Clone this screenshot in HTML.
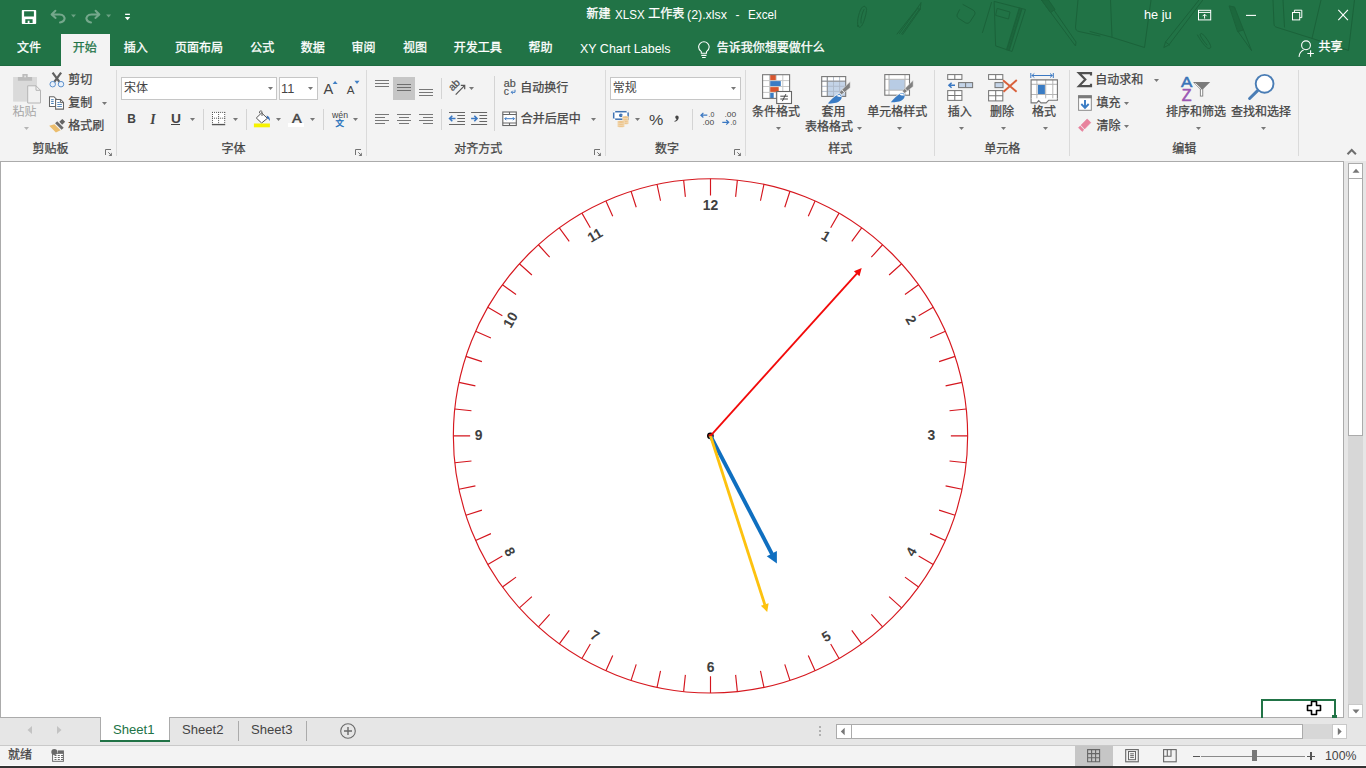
<!DOCTYPE html>
<html lang="zh"><head><meta charset="utf-8"><title>Excel</title>
<style>
html,body{margin:0;padding:0}
body{width:1366px;height:768px;overflow:hidden;position:relative;background:#fff;font-family:"Liberation Sans",sans-serif;}
.a{position:absolute;display:block}
.t{position:absolute;display:block;white-space:nowrap;line-height:1;transform-origin:0 50%}
.k{font-family:"Liberation Sans","Noto Sans CJK SC",sans-serif;font-size:12px}
</style></head><body>
<div class="a" style="left:0px;top:0px;width:1366px;height:66px;background:#217346;"></div>
<svg class="a" style="left:0;top:0" width="1366" height="66" viewBox="0 0 1366 66" fill="none" stroke="#1a6038" stroke-width="1" stroke-linecap="round" stroke-linejoin="round" opacity=".85">
<path d="M858 26.500c-1.800-6 2-17.500 4.500-19.500c2-1.500 4.500 0 4 3.500c-.6 5-3 13-5 15.500c-1.500 1.800-3.300 1.500-3.500-.500z"/>
<path d="M861 23c-.800-4 1.500-11 3-13.500"/>
<path d="M920.900 2.900l-3.800 5.600l-20 25.500M920.900 2.900l-.700 6.500l-17.500 25M917.100 8.500l3.100 .900M899.500 33.500l18.500-25.500M901.500 34l18-25"/>
<path d="M963 4.500l10 5.500c2 1.200 2.500 3 1.500 4.800l-4.500 7c-1 1.500-2.800 2-4.500 1l-7-4.500c-1.500-1-2-3-1-4.500l2-4"/>
<path d="M991.500 2.500l-9 30"/>
<path d="M994.500 1.500l31 8l-13.500 42l-16-5.500z"/>
<path d="M1021.500 9l-12.500 41M1019.500 8.500l-12.500 41" stroke-width="1.800"/>
<path d="M997.500 8.500l12.500 3.500l-1.500 7l-12.500-3.500z"/>
<path d="M1041.500 0l34 46l.500-4l-29-42z"/>
<path d="M1041.500 0l9 12.500l4.500-3l-6.500-9.500z" fill="#1c673c"/>
<path d="M1078 0l-2.500 27c-.200 2.500 1 4 3.500 4.500l21 4.500"/>
<path d="M1090 31.500l21 5.500l33.500 10.500l6.500-47.500M1110.500 0l1.500 37"/>
<path d="M1199 0l-33.500 42l-1.700 5.500l5-2.500l34-45M1165.500 42l4 3"/>
<path d="M1197.500 35c2 4 7 11 10 13c2 1.300 3.800 0 3-2.500c-1-3-5-9-8-11.500c-1.500-1.200-3 0-2 2c1.500 3 4.500 7 6.500 9"/>
<path d="M1229.500 6l5 1l9 23l-5.500 1.500z" fill="#1c673c"/>
<path d="M1238 31.500l13.500 19M1243.500 30l8 20.500"/>
<path d="M1273 0l1 24c.100 1.800 1 2.800 3 3.400l35 11l36.500 12l6-50.400M1283 0l1.500 27M1312 38.400l9-38.400"/>
</svg>

<div class="a" style="left:0px;top:65px;width:1366px;height:1px;background:#1d6a40;"></div>
<div class="a" style="left:61px;top:34px;width:49px;height:32px;background:#f3f3f3;"></div>
<span class="t k" style="left:586.6px;top:7.6px;color:#fff;-webkit-text-stroke:.3px #fff;">新建</span>
<span class="t" style="left:614.6px;top:8.64px;font-size:12px;color:#fff;transform:scaleX(0.9646);">XLSX</span>
<span class="t k" style="left:648.2px;top:7.6px;color:#fff;-webkit-text-stroke:.3px #fff;">工作表</span>
<span class="t" style="left:687.4px;top:8.64px;font-size:12px;color:#fff;transform:scaleX(1.0345);">(2).xlsx</span>
<span class="t" style="left:735.6px;top:8.64px;font-size:12px;color:#fff;">-</span>
<span class="t" style="left:748.3px;top:8.64px;font-size:12px;color:#fff;transform:scaleX(0.9747);">Excel</span>
<span class="t" style="left:1144px;top:8.64px;font-size:12px;color:#fff;transform:scaleX(1.0607);">he ju</span>
<span class="t k" style="left:16.9px;top:41.9px;color:#fff;-webkit-text-stroke:.3px #fff;">文件</span>
<span class="t k" style="left:123.8px;top:41.9px;color:#fff;-webkit-text-stroke:.3px #fff;">插入</span>
<span class="t k" style="left:175.1px;top:41.9px;color:#fff;-webkit-text-stroke:.3px #fff;">页面布局</span>
<span class="t k" style="left:250.2px;top:41.9px;color:#fff;-webkit-text-stroke:.3px #fff;">公式</span>
<span class="t k" style="left:300.8px;top:41.9px;color:#fff;-webkit-text-stroke:.3px #fff;">数据</span>
<span class="t k" style="left:351.6px;top:41.9px;color:#fff;-webkit-text-stroke:.3px #fff;">审阅</span>
<span class="t k" style="left:403px;top:41.9px;color:#fff;-webkit-text-stroke:.3px #fff;">视图</span>
<span class="t k" style="left:453.8px;top:41.9px;color:#fff;-webkit-text-stroke:.3px #fff;">开发工具</span>
<span class="t k" style="left:528.4px;top:41.9px;color:#fff;-webkit-text-stroke:.3px #fff;">帮助</span>
<span class="t k" style="left:72.8px;top:41.9px;color:#217346;-webkit-text-stroke:.25px #217346;">开始</span>
<span class="t" style="left:580px;top:42.94px;font-size:12px;color:#fff;transform:scaleX(1.0391);">XY Chart Labels</span>
<span class="t k" style="left:716.7px;top:41.9px;color:#fff;-webkit-text-stroke:.3px #fff;">告诉我你想要做什么</span>
<span class="t k" style="left:1318.4px;top:41.1px;color:#fff;-webkit-text-stroke:.3px #fff;">共享</span>
<svg class="a" style="left:0;top:0" width="1366" height="66" viewBox="0 0 1366 66" fill="none">
<!-- save -->
<path d="M22.6 9.9h12.8a.8.8 0 0 1 .8.8v12.6a.8.8 0 0 1-.8.8H22.6a.8.8 0 0 1-.8-.8V10.7a.8.8 0 0 1 .8-.8z" fill="#fff"/>
<rect x="24.1" y="11.3" width="9.8" height="5.2" fill="#217346"/>
<rect x="25.3" y="19.2" width="7.3" height="3.8" fill="#217346"/>
<rect x="27.7" y="20.7" width="1.8" height="2.3" fill="#fff"/>
<!-- undo -->
<g stroke="#fff" opacity=".38" stroke-width="2" stroke-linecap="round" stroke-linejoin="round">
<path d="M55.4 10.8L51.6 14.4L55.6 17.9M52 14.4H59.5C63.5 14.4 65 17.2 64.4 19.4C63.8 21.4 62 22.2 60 22.4"/>
<path d="M95.6 10.8L99.4 14.4L95.4 17.9M99 14.4H91.5C87.5 14.4 86 17.2 86.6 19.4C87.2 21.4 89 22.2 91 22.4"/>
</g>
<path d="M71 14.6h5l-2.5 3z" fill="#fff" fill-opacity=".33"/>
<path d="M106.1 14.6h5l-2.5 3z" fill="#fff" fill-opacity=".33"/>
<!-- customize -->
<rect x="125.1" y="13.7" width="4.8" height="1.3" fill="#fff"/>
<path d="M124.8 16.9h5.4l-2.7 3.4z" fill="#fff"/>
<!-- ribbon display options -->
<rect x="1198.5" y="10.3" width="12.2" height="9.6" stroke="#fff" stroke-width="1"/>
<path d="M1198.5 12.4h12.2" stroke="#fff" stroke-width="1"/>
<path d="M1204.6 18.6v-4.2M1202.6 16.2l2-2 2 2" stroke="#fff" stroke-width="1"/>
<!-- minimize -->
<path d="M1246 15.4h10" stroke="#fff" stroke-width="1.1"/>
<!-- restore -->
<path d="M1294.4 12.2v-2h7.4v7.4h-2" stroke="#fff" stroke-width="1"/>
<rect x="1292.5" y="12.5" width="7.2" height="7.4" stroke="#fff" stroke-width="1"/>
<!-- close -->
<path d="M1338.3 9.9l9.6 10.2M1347.9 9.9l-9.6 10.2" stroke="#fff" stroke-width="1.1"/>
<!-- person -->
<circle cx="1306" cy="45.3" r="4.4" stroke="#fff" stroke-width="1.1"/>
<path d="M1299 56.9c.2-3.3 2-5.6 4.600-6.800" stroke="#fff" stroke-width="1.1"/>
<path d="M1310.6 50.2v6.600M1307.3 53.5h6.600" stroke="#fff" stroke-width="1.1"/>
<!-- bulb -->
<path d="M701.300 53.300v-1.700c-1.700-1.100-2.700-2.500-2.700-4.500a5.300 5.300 0 0 1 10.600 0c0 2-1 3.400-2.700 4.500v1.700z" stroke="#fff" stroke-width="1.100"/>
<path d="M701.300 55.400h5.200M702.100 57.500h3.600" stroke="#fff" stroke-width="1.100"/>
</svg>

<div class="a" style="left:0px;top:66px;width:1366px;height:95px;background:#f3f3f3;"></div>
<div class="a" style="left:0px;top:161px;width:1366px;height:1px;background:#ababab;"></div>
<div class="a" style="left:116px;top:70px;width:1px;height:86px;background:#dadada;"></div>
<div class="a" style="left:366px;top:70px;width:1px;height:86px;background:#dadada;"></div>
<div class="a" style="left:605px;top:70px;width:1px;height:86px;background:#dadada;"></div>
<div class="a" style="left:745px;top:70px;width:1px;height:86px;background:#dadada;"></div>
<div class="a" style="left:934px;top:70px;width:1px;height:86px;background:#dadada;"></div>
<div class="a" style="left:1069px;top:70px;width:1px;height:86px;background:#dadada;"></div>
<div class="a" style="left:1298px;top:70px;width:1px;height:86px;background:#dadada;"></div>
<div class="a" style="left:494px;top:76px;width:1px;height:54.5px;background:#d4d4d4;"></div>
<div class="a" style="left:203px;top:109px;width:1px;height:21px;background:#d4d4d4;"></div>
<div class="a" style="left:246px;top:109px;width:1px;height:21px;background:#d4d4d4;"></div>
<div class="a" style="left:323px;top:109px;width:1px;height:21px;background:#d4d4d4;"></div>
<div class="a" style="left:441px;top:78px;width:1px;height:21px;background:#d4d4d4;"></div>
<div class="a" style="left:441px;top:109px;width:1px;height:21px;background:#d4d4d4;"></div>
<div class="a" style="left:692px;top:109px;width:1px;height:21px;background:#d4d4d4;"></div>
<span class="t k" style="left:32.4px;top:142.5px;color:#444;-webkit-text-stroke:.25px #444;">剪贴板</span>
<span class="t k" style="left:221.4px;top:142.5px;color:#444;-webkit-text-stroke:.25px #444;">字体</span>
<span class="t k" style="left:454.2px;top:142.5px;color:#444;-webkit-text-stroke:.25px #444;">对齐方式</span>
<span class="t k" style="left:655.1px;top:142.5px;color:#444;-webkit-text-stroke:.25px #444;">数字</span>
<span class="t k" style="left:828.2px;top:142.5px;color:#444;-webkit-text-stroke:.25px #444;">样式</span>
<span class="t k" style="left:984.3px;top:142.5px;color:#444;-webkit-text-stroke:.25px #444;">单元格</span>
<span class="t k" style="left:1172.3px;top:142.5px;color:#444;-webkit-text-stroke:.25px #444;">编辑</span>
<svg class="a" style="left:105px;top:149px;" width="8" height="8"><path d="M0.5 6V0.5H6" fill="none" stroke="#727272" stroke-width="1"/><path d="M3.300 3.300L5.500 5.500" stroke="#727272" stroke-width="1"/><path d="M6.900 3.600V6.900H3.600z" fill="#727272"/></svg>
<svg class="a" style="left:355px;top:149px;" width="8" height="8"><path d="M0.5 6V0.5H6" fill="none" stroke="#727272" stroke-width="1"/><path d="M3.300 3.300L5.500 5.500" stroke="#727272" stroke-width="1"/><path d="M6.900 3.600V6.900H3.600z" fill="#727272"/></svg>
<svg class="a" style="left:594px;top:149px;" width="8" height="8"><path d="M0.5 6V0.5H6" fill="none" stroke="#727272" stroke-width="1"/><path d="M3.300 3.300L5.500 5.500" stroke="#727272" stroke-width="1"/><path d="M6.900 3.600V6.900H3.600z" fill="#727272"/></svg>
<svg class="a" style="left:734px;top:149px;" width="8" height="8"><path d="M0.5 6V0.5H6" fill="none" stroke="#727272" stroke-width="1"/><path d="M3.300 3.300L5.500 5.500" stroke="#727272" stroke-width="1"/><path d="M6.900 3.600V6.900H3.600z" fill="#727272"/></svg>
<span class="t k" style="left:12.5px;top:106px;color:#a6a6a6;">粘贴</span>
<svg class="a" style="left:22.8px;top:125.8px;" width="7" height="5"><path d="M1 1h5l-2.5 3z" fill="#b5b5b5"/></svg>
<span class="t k" style="left:68.2px;top:74px;color:#444;-webkit-text-stroke:.25px #444;">剪切</span>
<span class="t k" style="left:68.2px;top:96.6px;color:#444;-webkit-text-stroke:.25px #444;">复制</span>
<svg class="a" style="left:101px;top:100.8px;" width="7" height="5"><path d="M1 1h5l-2.5 3z" fill="#777"/></svg>
<span class="t k" style="left:68.2px;top:119.6px;color:#444;-webkit-text-stroke:.25px #444;">格式刷</span>
<div class="a" style="left:121px;top:77px;width:156px;height:23px;background:#fff;box-sizing:border-box;border:1px solid #c6c6c6;"></div>
<div class="a" style="left:278.5px;top:77px;width:39.5px;height:23px;background:#fff;box-sizing:border-box;border:1px solid #c6c6c6;"></div>
<span class="t k" style="left:123.9px;top:82.1px;color:#444;">宋体</span>
<svg class="a" style="left:266.9px;top:86.1px;" width="7" height="5"><path d="M1 1h5l-2.5 3z" fill="#777"/></svg>
<span class="t" style="left:280.8px;top:82.59px;font-size:12.3px;color:#444;transform:scaleX(1.0379);">11</span>
<svg class="a" style="left:307px;top:86.1px;" width="7" height="5"><path d="M1 1h5l-2.5 3z" fill="#777"/></svg>
<span class="t" style="left:323.6px;top:82.07px;font-size:14.6px;color:#444;">A</span>
<span class="t" style="left:346.7px;top:84.43px;font-size:11.6px;color:#444;">A</span>
<svg class="a" style="left:331.5px;top:80px;" width="8" height="5"><path d="M0.6 4L3.100 .900L5.600 4z" fill="#3f7fc4"/></svg>
<svg class="a" style="left:353.6px;top:80px;" width="8" height="5"><path d="M0.5 .800L3 3.900L5.500 .800z" fill="#3f7fc4"/></svg>
<span class="t" style="left:127.2px;top:112.54px;font-size:12px;color:#444;font-weight:700;">B</span>
<span class="t" style="left:150.2px;top:112.81px;font-size:13.7px;color:#444;font-weight:700;font-style:italic;font-family:&quot;Liberation Serif&quot;,serif;">I</span>
<span class="t" style="left:170.5px;top:113.14px;font-size:12px;color:#444;font-weight:700;transform:scaleX(1.1539);">U</span>
<div class="a" style="left:171.3px;top:124px;width:8.4px;height:1px;background:#444;"></div>
<svg class="a" style="left:189.1px;top:117px;" width="7" height="5"><path d="M1 1h5l-2.5 3z" fill="#777"/></svg>
<svg class="a" style="left:231.7px;top:117px;" width="7" height="5"><path d="M1 1h5l-2.5 3z" fill="#777"/></svg>
<svg class="a" style="left:274.9px;top:117px;" width="7" height="5"><path d="M1 1h5l-2.5 3z" fill="#777"/></svg>
<span class="t" style="left:291.6px;top:111.56px;font-size:13.6px;color:#444;transform:scaleX(1.0583);-webkit-text-stroke:.55px #444;">A</span>
<div class="a" style="left:288.2px;top:123px;width:15.6px;height:4px;background:#fff;"></div>
<svg class="a" style="left:309.1px;top:117px;" width="7" height="5"><path d="M1 1h5l-2.5 3z" fill="#777"/></svg>
<span class="t" style="left:331.6px;top:110.7px;font-size:8.6px;color:#444;transform:scaleX(1.0142);">wén</span>
<span class="t k" style="left:335.6px;top:119px;font-size:8.4px;color:#2b75bd;-webkit-text-stroke:.5px #2b75bd;">文</span>
<svg class="a" style="left:351.9px;top:117px;" width="7" height="5"><path d="M1 1h5l-2.5 3z" fill="#777"/></svg>
<div class="a" style="left:393px;top:77px;width:22px;height:23px;background:#c6c6c6;"></div>
<div class="a" style="left:375px;top:80px;width:14px;height:1px;background:#777;"></div>
<div class="a" style="left:375px;top:83px;width:14px;height:1px;background:#777;"></div>
<div class="a" style="left:375px;top:86px;width:14px;height:1px;background:#777;"></div>
<div class="a" style="left:397px;top:84px;width:14px;height:1px;background:#6e6e6e;"></div>
<div class="a" style="left:397px;top:87px;width:14px;height:1px;background:#6e6e6e;"></div>
<div class="a" style="left:397px;top:90px;width:14px;height:1px;background:#6e6e6e;"></div>
<div class="a" style="left:419px;top:89px;width:14px;height:1px;background:#777;"></div>
<div class="a" style="left:419px;top:92px;width:14px;height:1px;background:#777;"></div>
<div class="a" style="left:419px;top:95px;width:14px;height:1px;background:#777;"></div>
<div class="a" style="left:375px;top:114px;width:14px;height:1px;background:#777;"></div>
<div class="a" style="left:375px;top:117px;width:10px;height:1px;background:#777;"></div>
<div class="a" style="left:375px;top:120px;width:14px;height:1px;background:#777;"></div>
<div class="a" style="left:375px;top:123px;width:10px;height:1px;background:#777;"></div>
<div class="a" style="left:397px;top:114px;width:14px;height:1px;background:#777;"></div>
<div class="a" style="left:399px;top:117px;width:10px;height:1px;background:#777;"></div>
<div class="a" style="left:397px;top:120px;width:14px;height:1px;background:#777;"></div>
<div class="a" style="left:399px;top:123px;width:10px;height:1px;background:#777;"></div>
<div class="a" style="left:419px;top:114px;width:14px;height:1px;background:#777;"></div>
<div class="a" style="left:423px;top:117px;width:10px;height:1px;background:#777;"></div>
<div class="a" style="left:419px;top:120px;width:14px;height:1px;background:#777;"></div>
<div class="a" style="left:423px;top:123px;width:10px;height:1px;background:#777;"></div>
<svg class="a" style="left:468px;top:85.9px;" width="7" height="5"><path d="M1 1h5l-2.5 3z" fill="#777"/></svg>
<span class="t k" style="left:520.2px;top:81.7px;color:#444;-webkit-text-stroke:.25px #444;">自动换行</span>
<span class="t k" style="left:520.7px;top:112.8px;color:#444;-webkit-text-stroke:.25px #444;">合并后居中</span>
<svg class="a" style="left:590px;top:117px;" width="7" height="5"><path d="M1 1h5l-2.5 3z" fill="#777"/></svg>
<div class="a" style="left:610px;top:77px;width:131px;height:23px;background:#fff;box-sizing:border-box;border:1px solid #c6c6c6;"></div>
<span class="t k" style="left:612.7px;top:82.1px;color:#444;">常规</span>
<svg class="a" style="left:729.8px;top:86.1px;" width="7" height="5"><path d="M1 1h5l-2.5 3z" fill="#777"/></svg>
<svg class="a" style="left:634px;top:117px;" width="7" height="5"><path d="M1 1h5l-2.5 3z" fill="#777"/></svg>
<span class="t" style="left:648.5px;top:112.17px;font-size:15.2px;color:#444;transform:scaleX(1.0581);">%</span>
<span class="t k" style="left:752px;top:106.2px;color:#444;-webkit-text-stroke:.25px #444;">条件格式</span>
<svg class="a" style="left:774.9px;top:125.8px;" width="7" height="5"><path d="M1 1h5l-2.5 3z" fill="#777"/></svg>
<span class="t k" style="left:821.6px;top:106.2px;color:#444;-webkit-text-stroke:.25px #444;">套用</span>
<span class="t k" style="left:804.9px;top:120.9px;color:#444;-webkit-text-stroke:.25px #444;">表格格式</span>
<svg class="a" style="left:856px;top:125.8px;" width="7" height="5"><path d="M1 1h5l-2.5 3z" fill="#777"/></svg>
<span class="t k" style="left:867.2px;top:106.2px;color:#444;-webkit-text-stroke:.25px #444;">单元格样式</span>
<svg class="a" style="left:896.2px;top:125.8px;" width="7" height="5"><path d="M1 1h5l-2.5 3z" fill="#777"/></svg>
<span class="t k" style="left:947.7px;top:106.2px;color:#444;-webkit-text-stroke:.25px #444;">插入</span>
<svg class="a" style="left:957.9px;top:125.8px;" width="7" height="5"><path d="M1 1h5l-2.5 3z" fill="#777"/></svg>
<span class="t k" style="left:989.9px;top:106.2px;color:#444;-webkit-text-stroke:.25px #444;">删除</span>
<svg class="a" style="left:1000.1px;top:125.8px;" width="7" height="5"><path d="M1 1h5l-2.5 3z" fill="#777"/></svg>
<span class="t k" style="left:1032.1px;top:106.2px;color:#444;-webkit-text-stroke:.25px #444;">格式</span>
<svg class="a" style="left:1041.9px;top:125.8px;" width="7" height="5"><path d="M1 1h5l-2.5 3z" fill="#777"/></svg>
<span class="t k" style="left:1095.3px;top:74px;color:#444;-webkit-text-stroke:.25px #444;">自动求和</span>
<svg class="a" style="left:1152.7px;top:77.7px;" width="7" height="5"><path d="M1 1h5l-2.5 3z" fill="#777"/></svg>
<span class="t k" style="left:1096.4px;top:96.7px;color:#444;-webkit-text-stroke:.25px #444;">填充</span>
<svg class="a" style="left:1123.1px;top:100.8px;" width="7" height="5"><path d="M1 1h5l-2.5 3z" fill="#777"/></svg>
<span class="t k" style="left:1096.4px;top:119.8px;color:#444;-webkit-text-stroke:.25px #444;">清除</span>
<svg class="a" style="left:1123.1px;top:124px;" width="7" height="5"><path d="M1 1h5l-2.5 3z" fill="#777"/></svg>
<span class="t k" style="left:1165.9px;top:106.2px;color:#444;-webkit-text-stroke:.25px #444;">排序和筛选</span>
<svg class="a" style="left:1195.1px;top:125.8px;" width="7" height="5"><path d="M1 1h5l-2.5 3z" fill="#777"/></svg>
<span class="t k" style="left:1231px;top:106.2px;color:#444;-webkit-text-stroke:.25px #444;">查找和选择</span>
<svg class="a" style="left:1260px;top:125.8px;" width="7" height="5"><path d="M1 1h5l-2.5 3z" fill="#777"/></svg>
<svg class="a" style="left:1346px;top:147px;" width="12" height="9"><path d="M1.500 7.200L5.700 3L9.900 7.200" fill="none" stroke="#6e6e6e" stroke-width="2"/></svg>
<svg class="a" style="left:0;top:66px" width="1366" height="95" viewBox="0 66 1366 95" fill="none" font-family="Liberation Sans, sans-serif">
<rect x="13.1" y="77" width="23.9" height="24.6" fill="#dadada"/>
<path d="M22.4 74h5.3v3h4.4v3.8H17.9V77h4.5z" fill="#bcbcbc"/>
<rect x="24.2" y="75.6" width="1.8" height="1.7" fill="#e4e4e4"/>
<path d="M27.7 85.8h8.3l4.5 4.5v12.7H27.7z" fill="#f1f1f1" stroke="#b4b4b4" stroke-width="1"/>
<path d="M36 85.8v4.5h4.5" stroke="#b4b4b4" stroke-width="1"/>
<path d="M52.6 72.7L59.4 81.9M61.1 72.7L54.3 81.9" stroke="#606060" stroke-width="2.25"/>
<circle cx="52.7" cy="84.2" r="2.75" fill="#eaf1fa" stroke="#4d87c7" stroke-width=".900"/>
<circle cx="61" cy="84.2" r="2.75" fill="#eaf1fa" stroke="#4d87c7" stroke-width=".900"/>
<path d="M49.5 96.7h4.4l2.3 2.3v7.4h-6.7z" fill="#fff" stroke="#666" stroke-width="1.05"/>
<path d="M51.1 99.7h2.6M51.1 101.6h2.6M51.1 103.5h2.6" stroke="#4a7fb5" stroke-width="1"/>
<path d="M55.6 99.5h5l2.9 2.9v6.7h-7.9z" fill="#fff" stroke="#666" stroke-width="1.05"/>
<path d="M60.4 99.7v2.9h2.9" stroke="#666" stroke-width="1"/>
<path d="M57.3 102.5h2.4M57.3 104.5h4.6M57.3 106.5h4.6" stroke="#4a7fb5" stroke-width=".9"/>
<path d="M62.3 118.9l2.9 2.9l-3 2.9l-2.9-2.9z" fill="#646464"/>
<path d="M57.2 121.2l6.5 6.5l-2.1 2.1l-6.5-6.500z" fill="#6c6c6c"/>
<path d="M54.5 124.2l6.1 6.1l-4.7 2.3l-6.7-6.9z" fill="#ebbd6d"/>
<rect x="212" y="112" width="13" height="11" fill="#fff"/>
<path d="M212 112.4h13.2M212 118.2h13.2" stroke="#555" stroke-width="1" stroke-dasharray="1 1.03"/>
<path d="M212.5 112v12M218.6 112v12M224.7 112v12" stroke="#555" stroke-width="1" stroke-dasharray="1 1.03"/>
<path d="M211.9 124.6h13.3" stroke="#555" stroke-width="1.3"/>
<path d="M261.6 112.9l5.8 5.4l-5.8 4.7l-5.3-5z" fill="#fff" stroke="#555" stroke-width="1"/>
<path d="M262 116v-4.3c0-1-2.5-1.2-2.5 .3v1.2" stroke="#555" stroke-width=".9"/>
<path d="M266.6 115.4c2.4 .500 3.700 2.900 3.300 5.800c-.900-1.700-1.700-2.300-2.700-2.700z" fill="#3b6fb6"/>
<rect x="253.9" y="123.5" width="16" height="3.8" fill="#f6f200"/>
<text x="0" y="0" font-size="10.5" fill="#505050" stroke="#505050" stroke-width=".25" transform="translate(452.4 91.6) rotate(-45)">ab</text>
<path d="M455.7 94.7l8.8-9" stroke="#555" stroke-width="1.2"/>
<path d="M460.8 85.4h3.9v3.9" stroke="#555" stroke-width="1.2" fill="none"/>
<text x="503.7" y="87.4" font-size="10.4" fill="#505050" stroke="#505050" stroke-width=".2" textLength="11.9" lengthAdjust="spacingAndGlyphs">ab</text>
<text x="503.7" y="94.8" font-size="10.4" fill="#505050" stroke="#505050" stroke-width=".2">c</text>
<path d="M515 89.7v2.6h-3.6M512.8 90.7l-1.6 1.6l1.6 1.6" stroke="#3b78c2" stroke-width="1"/>
<path d="M449 112.5h16M449 124.5h16M457.3 115.5h7.7M457.3 118.5h7.7M457.3 121.5h7.7" stroke="#666" stroke-width="1"/>
<path d="M455.5 118.5h-5.5M452.3 115.8l-2.7 2.7l2.7 2.7" stroke="#3b78c2" stroke-width="1.6"/>
<path d="M471.1 112.5h16M471.1 124.5h16M479.4 115.5h7.7M479.4 118.5h7.7M479.4 121.5h7.7" stroke="#666" stroke-width="1"/>
<path d="M471.1 118.5h5.5M474.3 115.8l2.7 2.7l-2.7 2.7" stroke="#3b78c2" stroke-width="1.6"/>
<rect x="502.8" y="112" width="13.5" height="13.5" fill="#fff" stroke="#666" stroke-width="1.1"/>
<path d="M502.8 114.5h13.5M502.8 123h13.5M509.5 112v2.5M509.5 123v2.5" stroke="#666" stroke-width="1.1"/>
<path d="M504.8 118.7h9.6M506.3 117.2l-1.5 1.5l1.5 1.5M512.9 117.2l1.5 1.5l-1.5 1.5" stroke="#3b78c2" stroke-width="1"/>
<rect x="613.7" y="111.7" width="14.4" height="7.5" fill="#fff" stroke="#3f73b3" stroke-width="1.5"/>
<path d="M613 111h2.2v1.5h-2.2zM626.6 111h2.2v1.5h-2.2zM613 118.4h2.2v1.5h-2.2z" fill="#fff"/>
<circle cx="620.9" cy="115.3" r="1.9" fill="#3f73b3"/>
<path d="M621.8 115.3a1 1 0 0 1 1.3 1.3" stroke="#fff" stroke-width=".8"/>
<ellipse cx="625.5" cy="123" rx="3.3" ry="1.25" fill="#ebbf80" stroke="#f6f0e6" stroke-width=".5"/>
<ellipse cx="625.5" cy="121" rx="3.3" ry="1.25" fill="#ebbf80" stroke="#f6f0e6" stroke-width=".5"/>
<ellipse cx="625.5" cy="119" rx="3.3" ry="1.25" fill="#ebbf80" stroke="#f6f0e6" stroke-width=".5"/>
<ellipse cx="625.5" cy="117.2" rx="3.3" ry="1.25" fill="#ebbf80" stroke="#f6f0e6" stroke-width=".5"/>
<ellipse cx="621" cy="126" rx="3.7" ry="1.3" fill="#ebbf80" stroke="#f6f0e6" stroke-width=".5"/>
<ellipse cx="621" cy="124" rx="3.7" ry="1.3" fill="#ebbf80" stroke="#f6f0e6" stroke-width=".5"/>
<ellipse cx="621" cy="122" rx="3.7" ry="1.3" fill="#ebbf80" stroke="#f6f0e6" stroke-width=".5"/>
<text x="708.5" y="117.3" font-size="6.8" fill="#444" textLength="5.8" lengthAdjust="spacingAndGlyphs">.0</text><text x="702.5" y="124.5" font-size="6.8" fill="#444" textLength="11.8" lengthAdjust="spacingAndGlyphs">.00</text>
<path d="M707.3 115.2h-6.5M703.4 112.9l-2.5 2.3l2.5 2.3" stroke="#3b78c2" stroke-width="1.2"/>
<text x="724.5" y="117.3" font-size="6.8" fill="#444" textLength="11.8" lengthAdjust="spacingAndGlyphs">.00</text><text x="730.5" y="124.5" font-size="6.8" fill="#444" textLength="5.8" lengthAdjust="spacingAndGlyphs">.0</text>
<path d="M722.3 122.3h6.5M726.2 120l2.5 2.3l-2.5 2.3" stroke="#3b78c2" stroke-width="1.2"/>
<path d="M676.8 115.4a1.9 1.9 0 0 1 1.9 2c0 2.2-1.6 3.8-4 4.4l-.400-.800c1.3-.500 2-1.2 2.2-2.1a1.8 1.8 0 0 1 .300-3.5z" fill="#444"/>
<rect x="762.6" y="74.7" width="27" height="23.7" fill="#fff"/>
<path d="M769.5 74.7v23.7M776.2 74.7v23.7M782.8 74.7v23.7M762.6 80.6h27M762.6 86.5h27M762.6 92.4h27" stroke="#c8c8c8" stroke-width="1"/>
<rect x="770.2" y="75" width="5.6" height="5.1" fill="#d9562e"/><rect x="770.2" y="81.1" width="10.6" height="4.9" fill="#3a7cc4"/><rect x="770.2" y="87.1" width="8.5" height="4.8" fill="#d9562e"/><rect x="770.2" y="93" width="3.5" height="5.1" fill="#3a7cc4"/>
<rect x="762.6" y="74.7" width="27" height="23.7" stroke="#777" stroke-width="1.1"/>
<rect x="776.7" y="91.5" width="14.8" height="12" fill="#fff" stroke="#666" stroke-width="1.1"/>
<path d="M780.3 96.2h7.6M780.3 99h7.6M785.9 94.1l-3.6 7.1" stroke="#444" stroke-width="1"/>
<rect x="821.7" y="76.6" width="24" height="19.8" fill="#fff"/>
<rect x="827.3" y="81.2" width="18.4" height="15.2" fill="#c4d4e8"/>
<path d="M827.3 76.6v19.8M833.5 76.6v19.8M839.6 76.6v19.8M821.7 81.2h24M821.7 86.3h24M821.7 91.4h24" stroke="#aeb9c8" stroke-width=".9"/>
<path d="M827.3 76.6v19.8M821.7 81.2h24" stroke="#8a8a8a" stroke-width=".9"/>
<rect x="821.7" y="76.6" width="24" height="19.8" stroke="#777" stroke-width="1.1"/>
<path d="M837.4 93.8C833.2 96.1 830 100.5 826.8 104.2C833 104.6 839 103.8 841.6 99.8C843 97.5 842 95.2 840.7 94.1C839.8 93.3 838.4 93.3 837.4 93.8Z" fill="#f3f3f3"/>
<path d="M850.2 81.6v6.2l-8.6 6.8l-2.3-2.3z" fill="#808080" stroke="#f3f3f3" stroke-width=".5"/>
<path d="M841.9 89.8l2.9 2.9" stroke="#f3f3f3" stroke-width=".9"/>
<path d="M838 94.6C834 96.5 830.5 100.5 827.8 103.6C833 103.8 838.5 103.2 841 99.6C842.3 97.5 841.5 95.5 840.3 94.6C839.6 94 838.7 94.2 838 94.6Z" fill="#3a7cc4"/>
<path d="M836.6 96c1.5-1.7 3.9-1.4 4.5 .900c-1.6-.100-3.100-.300-4.500-.900z" fill="#fff"/>
<rect x="884.8" y="74.6" width="24.7" height="20.6" fill="#fff"/>
<rect x="889" y="79.5" width="16" height="10.5" fill="#b8cce4"/>
<path d="M889 74.6v20.6M905 74.6v20.6M884.8 79.3h24.7M884.8 90.2h24.7" stroke="#b5b5b5" stroke-width="1"/>
<rect x="884.8" y="74.6" width="24.7" height="20.6" stroke="#777" stroke-width="1.1"/>
<path d="M900.4 92.5C896.2 94.8 893 99.2 889.8 102.9C896 103.3 902 102.5 904.6 98.5C906 96.2 905 93.9 903.7 92.8C902.8 92 901.4 92 900.4 92.5Z" fill="#f3f3f3"/>
<path d="M913.2 80.3v6.2l-8.6 6.8l-2.3-2.3z" fill="#808080" stroke="#f3f3f3" stroke-width=".5"/>
<path d="M904.9 88.5l2.9 2.9" stroke="#f3f3f3" stroke-width=".9"/>
<path d="M901 93.3C897 95.2 893.5 99.2 890.8 102.3C896 102.5 901.5 101.9 904 98.3C905.3 96.2 904.5 94.2 903.3 93.3C902.6 92.7 901.7 92.9 901 93.3Z" fill="#3a7cc4"/>
<path d="M899.6 94.7c1.5-1.7 3.9-1.4 4.5 .900c-1.6-.100-3.100-.300-4.500-.900z" fill="#fff"/>
<rect x="947.7" y="74.6" width="14.2" height="4.8" fill="#fff" stroke="#777" stroke-width="1.05"/>
<path d="M954.8 74.6v4.8" stroke="#777" stroke-width="1.05"/>
<rect x="958.6" y="82.6" width="14" height="5" fill="#c4d4e8" stroke="#777" stroke-width="1.05"/>
<path d="M965.6 82.6v5" stroke="#777" stroke-width="1.05"/>
<rect x="947.7" y="90.6" width="14.2" height="9.8" fill="#fff" stroke="#777" stroke-width="1.05"/>
<path d="M954.8 90.6v9.8M947.7 95.5h14.2" stroke="#777" stroke-width="1.05"/>
<path d="M955 85.2h-6.2M951.6 82.7l-2.7 2.5l2.7 2.5" stroke="#3b78c2" stroke-width="1.5"/>
<rect x="988.6" y="74.6" width="14.2" height="4.8" fill="#fff" stroke="#777" stroke-width="1.05"/>
<path d="M995.7 74.6v4.8" stroke="#777" stroke-width="1.05"/>
<rect x="995" y="82.6" width="8" height="5" fill="#c4d4e8" stroke="#777" stroke-width="1.05"/>
<rect x="988.6" y="90.6" width="14.2" height="10.3" fill="#fff" stroke="#777" stroke-width="1.05"/>
<path d="M995.7 90.6v10.3M988.6 95.75h14.2" stroke="#777" stroke-width="1.05"/>
<path d="M1003 80.2l13.6 11.6M1016.8 80l-13.3 11.8" stroke="#d9603a" stroke-width="1.9"/>
<rect x="1031.1" y="79.9" width="26.3" height="18.6" fill="#fff"/>
<path d="M1036.9 79.9v18.6M1045.7 79.9v18.6M1052.8 79.9v18.6M1031.1 84.3h26.3M1031.1 94.5h26.3" stroke="#b5b5b5" stroke-width="1"/>
<rect x="1037.9" y="85" width="7" height="9" fill="#3a7cc4"/>
<path d="M1031.1 98.5v-18.6h26.3v18.6" stroke="#777" stroke-width="1.1"/>
<path d="M1031.1 98.5v4.4h5.6l2-2.4l2.2 2.4h5.2l2.6-2.6h8.7v-1.8" stroke="#777" stroke-width="1.1" fill="#fff"/>
<path d="M1030.8 73v5M1053.3 73v5M1031.5 75.5h21M1034.3 73.5l-2.3 2l2.3 2M1050 73.5l2.3 2l-2.3 2" stroke="#3b78c2" stroke-width="1"/>
<path d="M1091 75.4v-2.3h-12l6.3 6.4l-6.3 6.6h12v-2.4" stroke="#505050" stroke-width="2.2" stroke-linejoin="miter"/>
<rect x="1078.6" y="95.8" width="12.7" height="14.5" fill="#fff" stroke="#8a8a8a" stroke-width="1"/>
<rect x="1078.1" y="95.3" width="13.7" height="3" fill="#7a7a7a"/>
<path d="M1085 100v7.6M1081.3 104l3.7 3.9l3.7-3.9" stroke="#3a7cc4" stroke-width="1.9"/>
<path d="M1087.2 119L1090.8 122.6L1084.6 128.9L1081 125.2Z" fill="#e8829d" stroke="#e8829d" stroke-width=".7" stroke-linejoin="round"/>
<path d="M1080.1 126.1L1083.8 129.8L1082.2 131.4L1078.5 127.7Z" fill="#e8829d" stroke="#e8829d" stroke-width=".6" stroke-linejoin="round"/>
<text x="1180.9" y="86.5" font-size="15.4" fill="#3a73b8" stroke="#3a73b8" stroke-width=".55" textLength="11.3" lengthAdjust="spacingAndGlyphs">A</text>
<text x="1181.8" y="100.5" font-size="15.8" fill="#9b57b3" stroke="#9b57b3" stroke-width=".55" textLength="9.8" lengthAdjust="spacingAndGlyphs">Z</text>
<path d="M1193 82.1h17.2l-7 6.8v7.7h-3.3v-7.7z" fill="#7a7a7a"/>
<path d="M1200.8 89.3v6.4h1.5v-6.4z" fill="#fff"/>
<path d="M1195.3 83.3l5.6 5.4" stroke="#fff" stroke-width=".9"/>
<circle cx="1264.6" cy="83.8" r="8.9" fill="#fff" stroke="#4a7db5" stroke-width="1.9"/>
<path d="M1257.6 90.6l-8 7.9" stroke="#4a7db5" stroke-width="3" stroke-linecap="round"/>
</svg>
<div class="a" style="left:0px;top:162px;width:1344px;height:555px;background:#fff;"></div>
<div class="a" style="left:0px;top:162px;width:1px;height:556px;background:#ababab;"></div>
<div class="a" style="left:1343px;top:162px;width:1px;height:556px;background:#ababab;"></div>
<div class="a" style="left:0px;top:717px;width:1344px;height:1px;background:#ababab;"></div>
<div class="a" style="left:1344px;top:161px;width:22px;height:557px;background:#e6e6e6;"></div>
<div class="a" style="left:1348px;top:179px;width:15px;height:525px;background:#d7d7d7;"></div>
<div class="a" style="left:1348px;top:163px;width:15px;height:16px;background:#fff;box-sizing:border-box;border:1px solid #ababab;"></div>
<div class="a" style="left:1348px;top:178px;width:15px;height:258px;background:#fff;box-sizing:border-box;border:1px solid #ababab;"></div>
<div class="a" style="left:1348px;top:704px;width:15px;height:14px;background:#fff;box-sizing:border-box;border:1px solid #c8c8c8;"></div>
<svg class="a" style="left:1351.5px;top:168px;" width="9" height="6"><path d="M0.5 4.8L4 0.8L7.500 4.8z" fill="#777"/></svg>
<svg class="a" style="left:1351.5px;top:708.5px;" width="9" height="6"><path d="M0.5 0.5L4 4.500L7.500 0.5z" fill="#777"/></svg>
<div class="a" style="left:1261px;top:699px;width:75px;height:19px;background:transparent;box-sizing:border-box;border:2px solid #217346;border-bottom:none;"></div>
<div class="a" style="left:1332px;top:715px;width:5px;height:3px;background:#217346;"></div>
<svg class="a" style="left:1306px;top:700px;" width="16" height="16"><path d="M5.5 1.5h5v4h4v5h-4v4h-5v-4h-4v-5h4z" fill="#fff" stroke="#000" stroke-width="1.6" stroke-linejoin="round"/></svg>
<svg class="a" style="left:0;top:162px" width="1343" height="555" viewBox="0 162 1343 555" font-family="Liberation Sans, sans-serif">
<circle cx="710.5" cy="435.85" r="257.15" fill="none" stroke="#d6181f" stroke-width="1.15"/>
<path d="M710.5 178.7L710.5 195.5M737.38 180.11L735.62 196.82M763.96 184.32L760.47 200.75M789.96 191.29L784.77 207.26M815.09 200.93L808.26 216.28M839.07 213.15L830.67 227.7M861.65 227.81L851.77 241.4M882.57 244.75L871.33 257.24M901.6 263.78L889.11 275.02M918.54 284.7L904.95 294.58M933.2 307.27L918.65 315.68M945.42 331.26L930.07 338.09M955.06 356.39L939.09 361.58M962.03 382.39L945.6 385.88M966.24 408.97L949.53 410.73M967.65 435.85L950.85 435.85M966.24 462.73L949.53 460.97M962.03 489.31L945.6 485.82M955.06 515.31L939.09 510.12M945.42 540.44L930.07 533.61M933.2 564.42L918.65 556.02M918.54 587L904.95 577.12M901.6 607.92L889.11 596.68M882.57 626.95L871.33 614.46M861.65 643.89L851.77 630.3M839.07 658.55L830.67 644M815.09 670.77L808.26 655.42M789.96 680.41L784.77 664.44M763.96 687.38L760.47 670.95M737.38 691.59L735.62 674.88M710.5 693L710.5 676.2M683.62 691.59L685.38 674.88M657.04 687.38L660.53 670.95M631.04 680.41L636.23 664.44M605.91 670.77L612.74 655.42M581.92 658.55L590.33 644M559.35 643.89L569.23 630.3M538.43 626.95L549.67 614.46M519.4 607.92L531.89 596.68M502.46 587L516.05 577.12M487.8 564.43L502.35 556.03M475.58 540.44L490.93 533.61M465.94 515.31L481.91 510.12M458.97 489.31L475.4 485.82M454.76 462.73L471.47 460.97M453.35 435.85L470.15 435.85M454.76 408.97L471.47 410.73M458.97 382.39L475.4 385.88M465.94 356.39L481.91 361.58M475.58 331.26L490.93 338.09M487.8 307.27L502.35 315.68M502.46 284.7L516.05 294.58M519.4 263.78L531.89 275.02M538.43 244.75L549.67 257.24M559.35 227.81L569.23 241.4M581.92 213.15L590.32 227.7M605.91 200.93L612.74 216.28M631.04 191.29L636.23 207.26M657.04 184.32L660.53 200.75M683.62 180.11L685.38 196.82" stroke="#d4161e" stroke-width="1.15" fill="none"/>
<text x="710.6" y="209.68" font-size="13.9" font-weight="700" fill="#404040" text-anchor="middle" transform="rotate(0 710.6 205.2)">12</text>
<text x="825.8" y="240.78" font-size="13.9" font-weight="700" fill="#404040" text-anchor="middle" transform="rotate(30 825.8 236.3)">1</text>
<text x="910.7" y="324.58" font-size="13.9" font-weight="700" fill="#404040" text-anchor="middle" transform="rotate(60 910.7 320.1)">2</text>
<text x="931.4" y="440.08" font-size="13.9" font-weight="700" fill="#404040" text-anchor="middle" transform="rotate(0 931.4 435.6)">3</text>
<text x="911.6" y="556.38" font-size="13.9" font-weight="700" fill="#404040" text-anchor="middle" transform="rotate(-60 911.6 551.9)">4</text>
<text x="826.4" y="641.08" font-size="13.9" font-weight="700" fill="#404040" text-anchor="middle" transform="rotate(-30 826.4 636.6)">5</text>
<text x="710.7" y="672.28" font-size="13.9" font-weight="700" fill="#404040" text-anchor="middle" transform="rotate(0 710.7 667.8)">6</text>
<text x="594.9" y="640.28" font-size="13.9" font-weight="700" fill="#404040" text-anchor="middle" transform="rotate(30 594.9 635.8)">7</text>
<text x="509.6" y="556.38" font-size="13.9" font-weight="700" fill="#404040" text-anchor="middle" transform="rotate(60 509.6 551.9)">8</text>
<text x="478.7" y="440.18" font-size="13.9" font-weight="700" fill="#404040" text-anchor="middle" transform="rotate(0 478.7 435.7)">9</text>
<text x="510.7" y="324.58" font-size="13.9" font-weight="700" fill="#404040" text-anchor="middle" transform="rotate(-60 510.7 320.1)">10</text>
<text x="595.1" y="239.98" font-size="13.9" font-weight="700" fill="#404040" text-anchor="middle" transform="rotate(-30 595.1 235.5)">11</text>
<circle cx="710.4" cy="435.85" r="2.7" fill="#c81e0a" stroke="#000" stroke-width="1.3"/>
<path d="M710.5 435.85L772.05 554.09" stroke="#0f6fc0" stroke-width="3.9" fill="none"/><path d="M776.9 563.4L766.76 556.27L776.88 551.01z" fill="#0f6fc0"/>
<path d="M710.5 435.85L764.9 604.86" stroke="#fdc20f" stroke-width="2.85" fill="none"/><path d="M767.2 612L760.85 605.64L768.65 603.13z" fill="#fdc20f"/>
<path d="M710.5 435.85L857.01 273.3" stroke="#f20a0a" stroke-width="1.85" fill="none"/><path d="M861.7 268.1L859.46 276.18L853.89 271.16z" fill="#f20a0a"/>
</svg>
<div class="a" style="left:0px;top:718px;width:1366px;height:27.5px;background:#e6e6e6;"></div>
<div class="a" style="left:100px;top:717px;width:70px;height:23px;background:#fff;"></div>
<div class="a" style="left:100px;top:740px;width:70px;height:2px;background:#217346;"></div>
<div class="a" style="left:100px;top:717px;width:1px;height:23px;background:#ababab;"></div>
<div class="a" style="left:169px;top:717px;width:1px;height:23px;background:#ababab;"></div>
<div class="a" style="left:238px;top:721px;width:1px;height:20px;background:#ababab;"></div>
<div class="a" style="left:306px;top:721px;width:1px;height:20px;background:#ababab;"></div>
<span class="t" style="left:113.25px;top:722.71px;font-size:13.7px;color:#217346;transform:scaleX(0.9558);">Sheet1</span>
<span class="t" style="left:182.25px;top:722.71px;font-size:13.7px;color:#444;transform:scaleX(0.9558);">Sheet2</span>
<span class="t" style="left:250.95px;top:722.71px;font-size:13.7px;color:#444;transform:scaleX(0.9558);">Sheet3</span>
<svg class="a" style="left:25.5px;top:725px;" width="8" height="10"><path d="M6 1L1.5 5L6 9z" fill="#c3c3c3"/></svg>
<svg class="a" style="left:54.5px;top:725px;" width="8" height="10"><path d="M2 1L6.5 5L2 9z" fill="#c3c3c3"/></svg>
<svg class="a" style="left:339px;top:722px;" width="18" height="18"><circle cx="9" cy="9" r="7.3" fill="none" stroke="#6a6a6a" stroke-width="1.1"/><path d="M9 5v8M5 9h8" stroke="#6a6a6a" stroke-width="1.4"/></svg>
<div class="a" style="left:819px;top:726px;width:2px;height:2px;background:#b0b0b0;"></div>
<div class="a" style="left:819px;top:730px;width:2px;height:2px;background:#b0b0b0;"></div>
<div class="a" style="left:819px;top:734px;width:2px;height:2px;background:#b0b0b0;"></div>
<div class="a" style="left:836px;top:724px;width:16px;height:15px;background:#fff;box-sizing:border-box;border:1px solid #ababab;"></div>
<div class="a" style="left:851px;top:724px;width:452px;height:15px;background:#fff;box-sizing:border-box;border:1px solid #ababab;"></div>
<div class="a" style="left:1303px;top:724px;width:29px;height:15px;background:#d7d7d7;"></div>
<div class="a" style="left:1332px;top:724px;width:15px;height:15px;background:#fff;box-sizing:border-box;border:1px solid #c8c8c8;"></div>
<svg class="a" style="left:840px;top:727px;" width="6" height="9"><path d="M4.7 0.8L0.8 4.5L4.7 8.2z" fill="#777"/></svg>
<svg class="a" style="left:1337px;top:727px;" width="6" height="9"><path d="M0.8 0.8L4.7 4.5L0.8 8.2z" fill="#777"/></svg>
<div class="a" style="left:0px;top:745px;width:1366px;height:1px;background:#c9c9c9;"></div>
<div class="a" style="left:0px;top:746px;width:1366px;height:20px;background:#f3f3f3;"></div>
<div class="a" style="left:0px;top:765px;width:1366px;height:1px;background:#fcfcfc;"></div>
<div class="a" style="left:0px;top:766px;width:1366px;height:2px;background:#333;"></div>
<span class="t k" style="left:8px;top:749.1px;color:#444;-webkit-text-stroke:.25px #444;">就绪</span>
<div class="a" style="left:1075px;top:746px;width:38px;height:20px;background:#c6c6c6;"></div>
<svg class="a" style="left:0;top:745px" width="1366" height="23" viewBox="0 745 1366 23" fill="none">
<rect x="52.6" y="753.3" width="10.8" height="8" fill="#fff" stroke="#6a6a6a" stroke-width="1"/>
<rect x="57.8" y="750.4" width="6.1" height="3" fill="#6a6a6a"/>
<circle cx="54.3" cy="752.1" r="3" fill="#6a6a6a"/>
<path d="M54.5 755h2v1h-2zM57.8 755h2v1h-2zM61 755h2v1h-2zM54.5 757h2v1h-2zM57.8 757h2v1h-2zM61 757h2v1h-2zM54.5 759h2v1h-2zM57.8 759h2v1h-2zM61 759h2v1h-2z" fill="#6a6a6a"/>
<path d="M1087.6 749.6h12v12.2h-12zM1091.6 749.6v12.2M1095.6 749.6v12.2M1087.6 753.6h12M1087.6 757.7h12" stroke="#666" stroke-width="1.1"/>
<rect x="1125.7" y="749.6" width="12.6" height="12.2" stroke="#666" stroke-width="1.1"/>
<rect x="1128.5" y="751.5" width="7" height="8.2" stroke="#666" stroke-width="1"/>
<path d="M1130.2 753.8h3.7M1130.2 755.6h3.7M1130.2 757.4h3.7" stroke="#666" stroke-width="1"/>
<rect x="1163.6" y="749.6" width="12.6" height="12.2" stroke="#666" stroke-width="1.1"/>
<path d="M1167.3 749.6v6.7M1171 749.6v6.7h-7.4" stroke="#666" stroke-width="1.1"/>
</svg>
<span class="t" style="left:1325px;top:749.74px;font-size:12px;color:#444;transform:scaleX(1.0263);">100%</span>
<div class="a" style="left:1201px;top:756px;width:104px;height:1px;background:#8a8a8a;"></div>
<div class="a" style="left:1252px;top:750px;width:5px;height:11px;background:#777;"></div>
<div class="a" style="left:1193px;top:755.5px;width:7px;height:1.4px;background:#555;"></div>
<div class="a" style="left:1307px;top:755.5px;width:8px;height:1.4px;background:#555;"></div>
<div class="a" style="left:1310.3px;top:752.2px;width:1.4px;height:8px;background:#555;"></div>
</body></html>
